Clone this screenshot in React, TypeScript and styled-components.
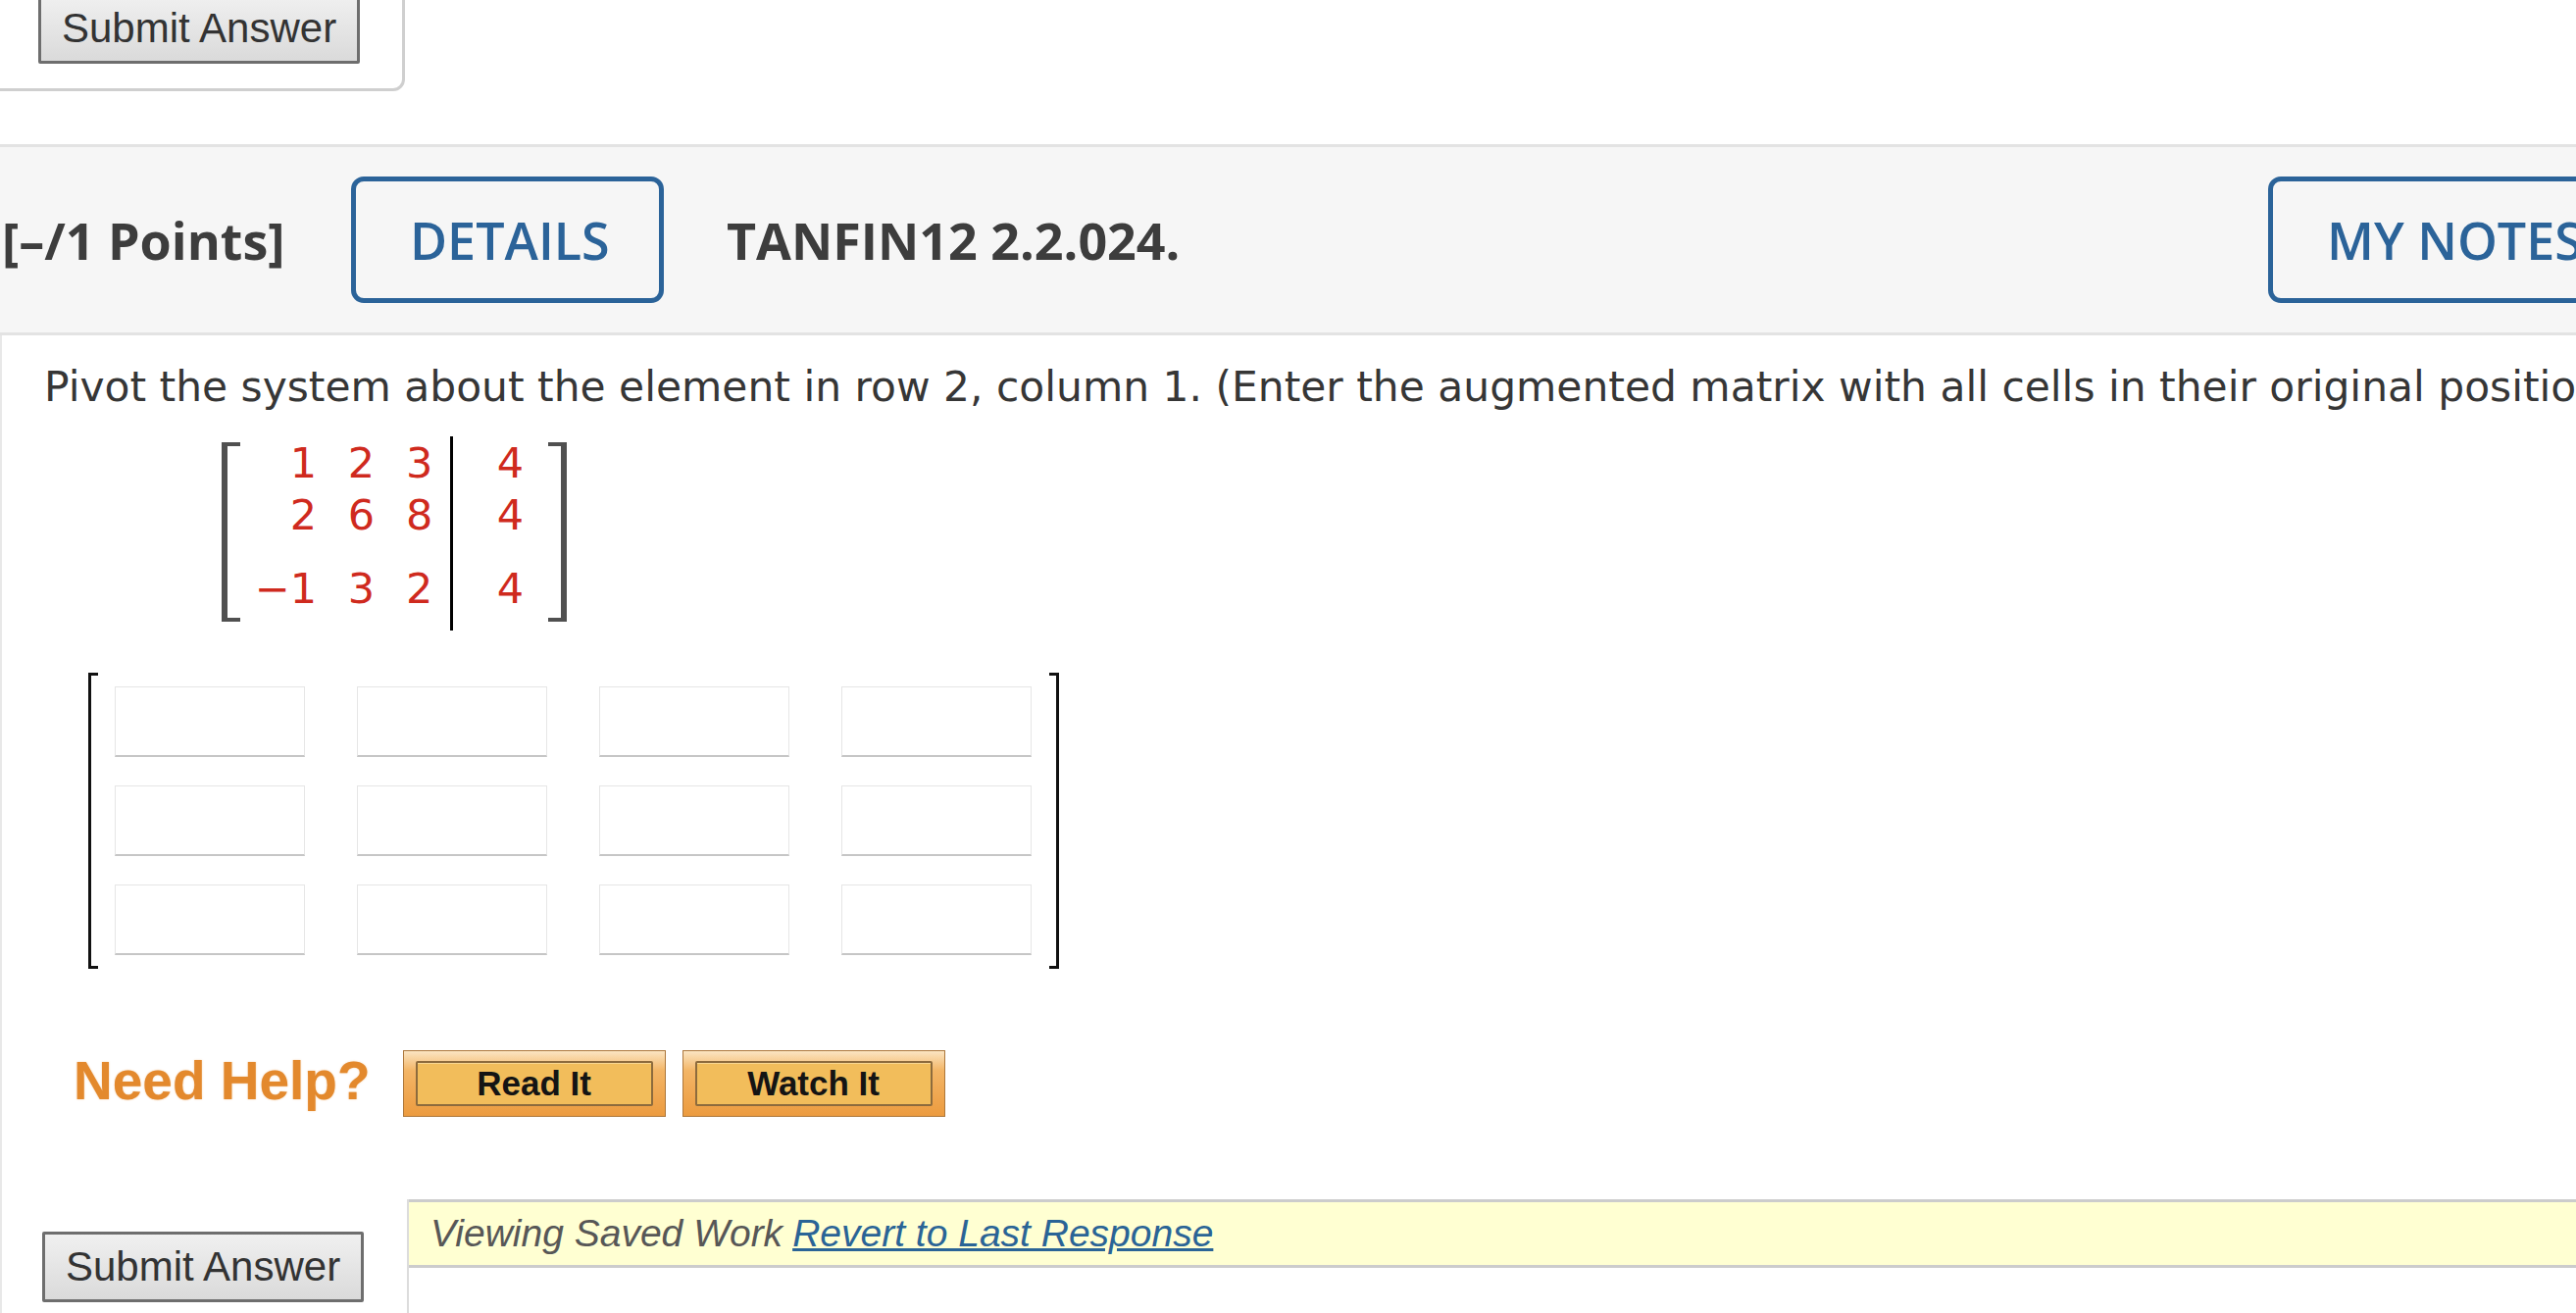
import React from "react"
import styled, { createGlobalStyle } from "styled-components"

const GlobalStyle = createGlobalStyle`
  html, body {
    margin: 0;
    padding: 0;
    background: #fff;
    overflow: hidden;
  }
`

const given = [
  ["1", "2", "3", "4"],
  ["2", "6", "8", "4"],
  ["\u22121", "3", "2", "4"],
]

const Page = styled.div`
  width: 2733px;
  font-family: "Liberation Sans", Arial, sans-serif;
`

const PrevCard = styled.div`
  width: 433px;
  box-sizing: border-box;
  margin: -30px 0 0 -20px;
  padding: 20px 0 25px 56px;
  border: 3px solid #cfcfcf;
  border-radius: 12px;
  background: #fff;
`

const SubmitButton = styled.button`
  display: block;
  height: 72px;
  padding: 0 21px;
  border: 3px solid #6e6e6e;
  border-radius: 2px;
  background: linear-gradient(#f0f0f0, #dadada);
  color: #333;
  font-family: "Liberation Sans", Arial, sans-serif;
  font-size: 42px;
  white-space: nowrap;
`

const Header = styled.div`
  display: flex;
  align-items: center;
  height: 189px;
  margin-top: 54px;
  border-top: 3px solid #e3e3e3;
  border-bottom: 3px solid #e3e3e3;
  background: #f6f6f6;
  font-family: "Open Sans", sans-serif;
`

const Points = styled.div`
  flex: 0 0 356px;
  padding-left: 2px;
  font-size: 52px;
  font-weight: 700;
  color: #3d3d3d;
  white-space: nowrap;
`

const OutlineBox = styled.div<{ $push?: boolean; $w: number }>`
  display: flex;
  align-items: center;
  flex: 0 0 ${p => p.$w}px;
  box-sizing: border-box;
  height: 129px;
  padding-left: 55px;
  margin-left: ${p => (p.$push ? "auto" : "0")};
  border: 5px solid #2b6399;
  border-radius: 13px;
  color: #2b6399;
  font-size: 52px;
  font-weight: 600;
  white-space: nowrap;
`

const Code = styled.div`
  margin-left: 64px;
  font-size: 52px;
  font-weight: 700;
  color: #3d3d3d;
  white-space: nowrap;
`

const Content = styled.div`
  border-left: 2px solid #e8e8e8;
`

const Prompt = styled.div`
  padding: 28px 0 0 43px;
  font-family: Verdana, "DejaVu Sans", sans-serif;
  font-size: 42.4px;
  color: #363636;
  white-space: nowrap;
`

const Given = styled.div`
  display: flex;
  align-items: flex-start;
  margin: 27px 0 0 224px;
`

const GivenBracket = styled.div<{ $right?: boolean }>`
  width: 13px;
  height: 175px;
  margin-top: 5px;
  border: 4px solid #505050;
  border-${p => (p.$right ? "left" : "right")}: none;
  border-${p => (p.$right ? "right" : "left")}-width: 6px;
  margin-left: ${p => (p.$right ? "25px" : "0")};
  margin-right: ${p => (p.$right ? "0" : "14px")};
`

const GivenGrid = styled.div`
  display: grid;
  grid-template-columns: 64px 91px 27px 18px 3px 72px;
  grid-template-rows: 53px 53px 75px;
  font-family: Verdana, "DejaVu Sans", sans-serif;
  font-size: 43px;
  line-height: 53px;
  color: #cf2a1e;
`

const Cell = styled.div<{ $align: string; $col: number; $row: number }>`
  grid-column: ${p => p.$col};
  grid-row: ${p => p.$row};
  align-self: end;
  text-align: ${p => p.$align};
`

const Divider = styled.div`
  grid-column: 5;
  grid-row: 1 / -1;
  margin: -1px 0 -16px;
  background: #000;
`

const Answer = styled.div`
  display: flex;
  align-items: stretch;
  width: max-content;
  margin: 52px 0 0 88px;
`

const AnswerBracket = styled.div<{ $right?: boolean }>`
  width: 7px;
  height: 296px;
  border: 3px solid #111;
  border-${p => (p.$right ? "left" : "right")}: none;
`

const AnswerGrid = styled.div`
  display: grid;
  grid-template-columns: repeat(4, 194px);
  grid-auto-rows: 72px;
  column-gap: 53px;
  row-gap: 29px;
  padding: 14px 18px 15px 17px;
`

const Box = styled.input`
  box-sizing: border-box;
  width: 194px;
  height: 72px;
  margin: 0;
  border: 1px solid #e6e6e6;
  border-bottom: 2px solid #c6c6c6;
  background: #fff;
  outline: none;
`

const HelpRow = styled.div`
  display: flex;
  align-items: center;
  margin-top: 82px;
  padding-left: 73px;
`

const NeedHelp = styled.span`
  margin-right: 33px;
  font-family: "Liberation Sans", Arial, sans-serif;
  font-size: 55px;
  font-weight: 700;
  color: #e3892d;
  text-shadow: 0 0 2px rgba(227, 137, 45, 0.45);
  white-space: nowrap;
  position: relative;
  top: -3px;
`

const HelpButton = styled.button`
  box-sizing: border-box;
  width: 268px;
  height: 68px;
  margin-right: 17px;
  padding: 10px 12px;
  border: 1px solid #ad773b;
  background: linear-gradient(#fbe5c2 0%, #f3b566 30%, #ec9b3f 100%);
`

const HelpInner = styled.span`
  display: flex;
  align-items: center;
  justify-content: center;
  box-sizing: border-box;
  height: 100%;
  border: 2px solid #8d6b3d;
  border-radius: 2px;
  background: #f2bd5b;
  box-shadow: inset 0 1px 0 #f8d690;
  font-family: "Liberation Sans", Arial, sans-serif;
  font-size: 35px;
  font-weight: 700;
  color: #141414;
  white-space: nowrap;
`

const Bottom = styled.div`
  display: flex;
  align-items: flex-start;
  margin-top: 84px;
`

const SubmitCol = styled.div`
  flex: 0 0 413px;
  padding: 33px 0 0 41px;
  box-sizing: border-box;
`

const SavedCol = styled.div`
  flex: 1;
  height: 140px;
  border-left: 2px solid #dcdcdc;
`

const SavedBar = styled.div`
  display: flex;
  align-items: center;
  height: 64px;
  padding-left: 22px;
  border-top: 3px solid #cccccc;
  border-bottom: 3px solid #cccccc;
  background: #ffffd2;
  font-family: "Liberation Sans", Arial, sans-serif;
  font-size: 39px;
  font-style: italic;
  color: #575757;
  white-space: nowrap;
`

const RevertLink = styled.a`
  margin-left: 10px;
  color: #2a6496;
  text-decoration: underline;
`

export default function App() {
  return (
    <Page>
      <GlobalStyle />
      <PrevCard>
        <SubmitButton>Submit Answer</SubmitButton>
      </PrevCard>

      <Header>
        <Points>[–/1 Points]</Points>
        <OutlineBox $w={319}>DETAILS</OutlineBox>
        <Code>TANFIN12 2.2.024.</Code>
        <OutlineBox $push $w={420}>MY NOTES</OutlineBox>
      </Header>

      <Content>
        <Prompt>
          Pivot the system about the element in row 2, column 1. (Enter the augmented matrix with all cells in their original positions.)
        </Prompt>

        <Given>
          <GivenBracket />
          <GivenGrid>
            {given.map((row, r) => (
              <React.Fragment key={r}>
                <Cell $col={1} $row={r + 1} $align="right">{row[0]}</Cell>
                <Cell $col={2} $row={r + 1} $align="center">{row[1]}</Cell>
                <Cell $col={3} $row={r + 1} $align="center">{row[2]}</Cell>
                <Cell $col={6} $row={r + 1} $align="right">{row[3]}</Cell>
              </React.Fragment>
            ))}
            <Divider />
          </GivenGrid>
          <GivenBracket $right />
        </Given>

        <Answer>
          <AnswerBracket />
          <AnswerGrid>
            {Array.from({ length: 12 }).map((_, i) => (
              <Box key={i} type="text" aria-label={`cell ${i + 1}`} />
            ))}
          </AnswerGrid>
          <AnswerBracket $right />
        </Answer>

        <HelpRow>
          <NeedHelp>Need Help?</NeedHelp>
          <HelpButton>
            <HelpInner>Read It</HelpInner>
          </HelpButton>
          <HelpButton>
            <HelpInner>Watch It</HelpInner>
          </HelpButton>
        </HelpRow>

        <Bottom>
          <SubmitCol>
            <SubmitButton>Submit Answer</SubmitButton>
          </SubmitCol>
          <SavedCol>
            <SavedBar>
              Viewing Saved Work
              <RevertLink href="#">Revert to Last Response</RevertLink>
            </SavedBar>
          </SavedCol>
        </Bottom>
      </Content>
    </Page>
  )
}
